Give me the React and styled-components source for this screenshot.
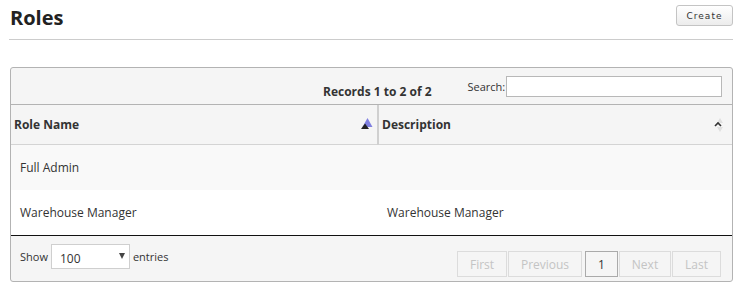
import React from "react";
import styled, { createGlobalStyle } from "styled-components";

const GlobalStyle = createGlobalStyle`
  body {
    margin: 0;
    background: #fff;
    font-family: "Open Sans", "Liberation Sans", sans-serif;
    color: #333;
  }
`;

const Page = styled.div`
  padding: 5px 8px 0 9px;
`;

const Header = styled.div`
  display: flex;
  align-items: flex-start;
  justify-content: space-between;
  height: 34px;
  border-bottom: 1px solid #ccc;
`;

const Title = styled.h1`
  margin: 0;
  padding: 1px 0 0 1px;
  font-size: 20px;
  line-height: 24px;
  font-weight: 700;
  color: #222;
`;

const CreateButton = styled.button`
  width: 57px;
  height: 21px;
  padding: 0;
  font-family: "DejaVu Sans", "Liberation Sans", sans-serif;
  font-size: 9px;
  letter-spacing: 1px;
  color: #333;
  border: 1px solid #c4c4c4;
  border-radius: 3px;
  background: linear-gradient(#fff, #ececec);
  cursor: pointer;
`;

const Panel = styled.div`
  margin: 27px 0 0 1px;
  width: 721px;
  border: 1px solid #b3b3b3;
  border-radius: 3px;
  background: #f5f5f5;
  overflow: hidden;
`;

const Toolbar = styled.div`
  display: flex;
  align-items: center;
  height: 36px;
  border-bottom: 1px solid #b3b3b3;
`;

const Records = styled.div`
  margin-left: 312px;
  padding-top: 10px;
  font-size: 12px;
  font-weight: 700;
  color: #333;
`;

const SearchLabel = styled.label`
  margin-left: 36px;
  display: flex;
  align-items: center;
  font-size: 11px;
  color: #333;

  input {
    width: 212px;
    height: 17px;
    margin-left: 1px;
    border: 1px solid #b8b8b8;
    padding: 1px;
    background: #fff;
  }
`;

const Table = styled.table`
  width: 100%;
  border-collapse: collapse;
  font-size: 12px;
`;

const Th = styled.th`
  position: relative;
  height: 39px;
  padding: 0 0 0 3px;
  text-align: left;
  font-weight: 700;
  color: #333;
  background: #f5f5f5;
  border-bottom: 1px solid #d4d4d4;
  border-left: ${(p) => (p.$first ? "none" : "2px solid #d0d0d0")};
  width: ${(p) => p.$width || "auto"};
`;

const SortIcon = styled.span`
  position: absolute;
  right: ${(p) => p.$right}px;
  top: 13px;
  display: flex;
`;

const Tr = styled.tr`
  background: ${(p) => (p.$odd ? "#f9f9f9" : "#fff")};
`;

const Td = styled.td`
  height: ${(p) => p.$h}px;
  padding: 0 0 0 ${(p) => p.$pad}px;
  color: #333;
  font-size: 12px;
`;

const Footer = styled.div`
  display: flex;
  align-items: center;
  justify-content: space-between;
  height: 45px;
  border-top: 1px solid #111;
  padding: 0 11px 0 9px;
`;

const Length = styled.div`
  display: flex;
  align-items: center;
  gap: 3px;
  font-size: 11px;
  color: #333;
  margin-top: -5px;
`;

const Select = styled.div`
  position: relative;
  width: 79px;
  height: 25px;
  box-sizing: border-box;
  border: 1px solid #cfcfcf;
  background: #fff;
  font-size: 12px;
  padding: 5px 0 0 8px;
  color: #333;

  &::after {
    content: "";
    position: absolute;
    right: 4px;
    top: 8px;
    border-left: 3.5px solid transparent;
    border-right: 3.5px solid transparent;
    border-top: 6px solid #444;
  }
`;

const Pager = styled.div`
  display: flex;
  gap: 1px;
  margin-top: 11px;
`;

const PageButton = styled.span`
  display: flex;
  align-items: center;
  justify-content: center;
  height: 26px;
  box-sizing: border-box;
  width: ${(p) => p.$w}px;
  border: 1px solid ${(p) => (p.$current ? "#aaa" : "#dcdcdc")};
  color: ${(p) => (p.$current ? "#333" : "#c4c4c4")};
  font-size: 12px;
  background: #f5f5f5;
  margin-left: ${(p) => (p.$gap ? 2 : 0)}px;
`;

const SortAsc = () => (
  <svg width="13" height="11" viewBox="0 0 13 11">
    <polygon points="7.5,0 12.5,9 2.5,9" fill="#8080e0" />
    <polygon points="5,5.5 9,11 1,11" fill="#222" />
  </svg>
);

const SortBoth = () => (
  <svg width="10" height="14" viewBox="0 0 10 14">
    <polygon points="6,0 9,5 3,5" fill="#e0e0e0" />
    <polygon points="3,9 9,9 6,14" fill="#e0e0e0" />
    <polyline points="1,8 4,5 7,8" fill="none" stroke="#333" strokeWidth="1.6" />
  </svg>
);

const rows = [
  { name: "Full Admin", desc: "" },
  { name: "Warehouse Manager", desc: "Warehouse Manager" },
];

export default function App() {
  return (
    <>
      <GlobalStyle />
      <Page>
        <Header>
          <Title>Roles</Title>
          <CreateButton>Create</CreateButton>
        </Header>
        <Panel>
          <Toolbar>
            <Records>Records 1 to 2 of 2</Records>
            <SearchLabel>
              Search:<input type="text" />
            </SearchLabel>
          </Toolbar>
          <Table>
            <thead>
              <tr>
                <Th $first $width="363px">
                  Role Name
                  <SortIcon $right={4}>
                    <SortAsc />
                  </SortIcon>
                </Th>
                <Th>
                  Description
                  <SortIcon $right={8}>
                    <SortBoth />
                  </SortIcon>
                </Th>
              </tr>
            </thead>
            <tbody>
              {rows.map((r, i) => (
                <Tr key={r.name} $odd={i % 2 === 0}>
                  <Td $h={45} $pad={9}>{r.name}</Td>
                  <Td $h={45} $pad={9}>{r.desc}</Td>
                </Tr>
              ))}
            </tbody>
          </Table>
          <Footer>
            <Length>
              Show
              <Select>100</Select>
              entries
            </Length>
            <Pager>
              <PageButton $w={50}>First</PageButton>
              <PageButton $w={74}>Previous</PageButton>
              <PageButton $w={33} $current $gap>1</PageButton>
              <PageButton $w={52}>Next</PageButton>
              <PageButton $w={49}>Last</PageButton>
            </Pager>
          </Footer>
        </Panel>
      </Page>
    </>
  );
}
